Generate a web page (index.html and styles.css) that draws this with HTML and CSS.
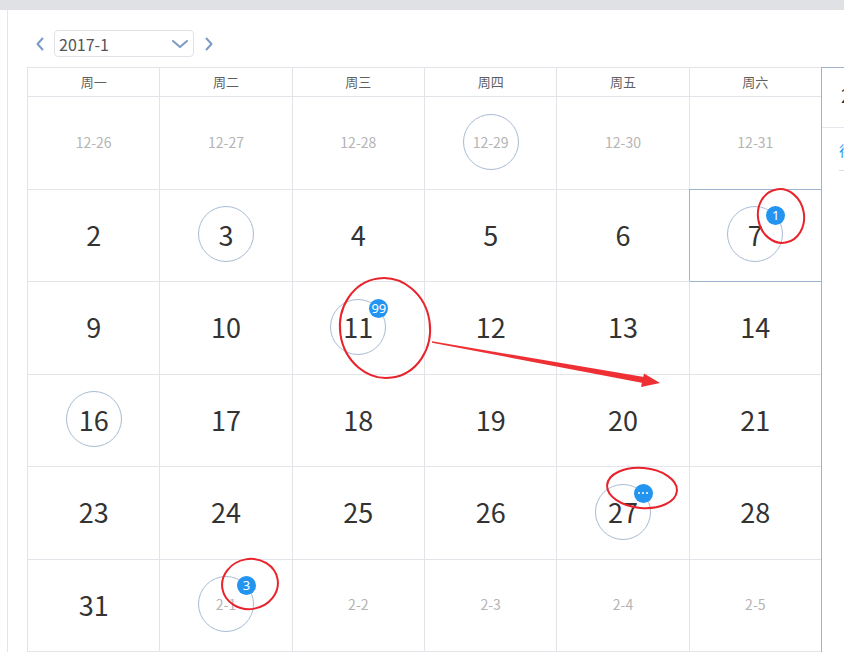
FILE: index.html
```html
<!DOCTYPE html>
<html lang="zh-CN">
<head>
<meta charset="utf-8">
<title>日历</title>
<link rel="stylesheet" href="styles.css">
</head>
<body>
<div class="topbar"></div>
<div class="page">
  <div class="nav">
    <svg class="arrow" width="10" height="14" viewBox="0 0 10 14"><path d="M7.5 1.5 L2.5 7 L7.5 12.5" fill="none" stroke="#7b9bc4" stroke-width="2" stroke-linecap="round" stroke-linejoin="round"/></svg>
    <div class="select">
      <span class="select-text">2017-1</span>
      <svg class="caret" width="18" height="10" viewBox="0 0 18 10"><path d="M2 2 L9 8 L16 2" fill="none" stroke="#7b9bc4" stroke-width="2" stroke-linecap="round" stroke-linejoin="round"/></svg>
    </div>
    <svg class="arrow" width="10" height="14" viewBox="0 0 10 14"><path d="M2.5 1.5 L7.5 7 L2.5 12.5" fill="none" stroke="#7b9bc4" stroke-width="2" stroke-linecap="round" stroke-linejoin="round"/></svg>
  </div>
  <div class="cal-wrap">
    <div class="cal">
      <div class="head">周一</div><div class="head">周二</div><div class="head">周三</div><div class="head">周四</div><div class="head">周五</div><div class="head">周六</div>

      <div class="cell"><span class="other">12-26</span></div>
      <div class="cell"><span class="other">12-27</span></div>
      <div class="cell"><span class="other">12-28</span></div>
      <div class="cell"><span class="ring"><span class="other">12-29</span></span></div>
      <div class="cell"><span class="other">12-30</span></div>
      <div class="cell"><span class="other">12-31</span></div>

      <div class="cell"><span class="day">2</span></div>
      <div class="cell"><span class="ring"><span class="day">3</span></span></div>
      <div class="cell"><span class="day">4</span></div>
      <div class="cell"><span class="day">5</span></div>
      <div class="cell"><span class="day">6</span></div>
      <div class="cell sel"><span class="ring"><span class="day">7</span><span class="badge">1</span></span></div>

      <div class="cell"><span class="day">9</span></div>
      <div class="cell"><span class="day">10</span></div>
      <div class="cell"><span class="ring"><span class="day">11</span><span class="badge">99</span></span></div>
      <div class="cell"><span class="day">12</span></div>
      <div class="cell"><span class="day">13</span></div>
      <div class="cell"><span class="day">14</span></div>

      <div class="cell"><span class="ring"><span class="day">16</span></span></div>
      <div class="cell"><span class="day">17</span></div>
      <div class="cell"><span class="day">18</span></div>
      <div class="cell"><span class="day">19</span></div>
      <div class="cell"><span class="day">20</span></div>
      <div class="cell"><span class="day">21</span></div>

      <div class="cell"><span class="day">23</span></div>
      <div class="cell"><span class="day">24</span></div>
      <div class="cell"><span class="day">25</span></div>
      <div class="cell"><span class="day">26</span></div>
      <div class="cell"><span class="ring"><span class="day">27</span><span class="badge dots"><i></i><i></i><i></i></span></span></div>
      <div class="cell"><span class="day">28</span></div>

      <div class="cell"><span class="day">31</span></div>
      <div class="cell"><span class="ring"><span class="other">2-1</span><span class="badge">3</span></span></div>
      <div class="cell"><span class="other">2-2</span></div>
      <div class="cell"><span class="other">2-3</span></div>
      <div class="cell"><span class="other">2-4</span></div>
      <div class="cell"><span class="other">2-5</span></div>
    </div>
    <div class="panel">
      <div class="panel-title">2017-01-07</div>
      <div class="panel-tabs"><span class="tab">待办事项</span></div>
    </div>
  </div>
</div>
<svg class="annot" width="844" height="652" viewBox="0 0 844 652">
  <g fill="none" stroke="#e8232b" stroke-width="2">
    <ellipse cx="781" cy="216" rx="23" ry="27" transform="rotate(-10 781 216)"/>
    <ellipse cx="385" cy="328" rx="45" ry="50" transform="rotate(-8 385 328)"/>
    <ellipse cx="642" cy="488" rx="35" ry="20" transform="rotate(5 642 488)"/>
    <ellipse cx="250" cy="584" rx="28" ry="25" transform="rotate(-10 250 584)"/>
  </g>
  <polygon points="432,341.3 432,342.7 643,383 644,377" fill="#ee2f33"/>
  <polygon points="660,383 644,373.5 641,387" fill="#ee2f33"/>
</svg>
</body>
</html>
```
FILE: styles.css
```css
* { box-sizing: border-box; }
html, body {
  margin: 0;
  padding: 0;
  width: 844px;
  height: 652px;
  overflow: hidden;
  background: #fff;
  font-family: "Noto Sans CJK SC", "Noto Sans", sans-serif;
  color: #333;
}
.topbar {
  height: 10px;
  background: #dfe1e5;
}
.page {
  margin-left: 7px;
  border-left: 1px solid #e3e5e9;
  height: 642px;
  padding: 20px 0 0 19px;
}
.nav {
  display: flex;
  align-items: center;
  height: 27px;
  margin-bottom: 10px;
  padding-left: 8px;
}
.arrow { display: block; }
.select {
  width: 140px;
  height: 27px;
  margin: 0 10px 0 9px;
  border: 1px solid #dfe2e7;
  border-radius: 4px;
  display: flex;
  align-items: center;
  justify-content: space-between;
  padding: 0 4px 0 4px;
}
.select-text {
  font-size: 16px;
  color: #555;
  line-height: 1;
}
.caret { display: block; }
.cal-wrap {
  display: flex;
  align-items: flex-start;
}
.cal {
  width: 795px;
  display: grid;
  grid-template-columns: repeat(6, 1fr);
  grid-template-rows: 29px repeat(6, 92.5px);
  border-top: 1px solid #e2e4e9;
  border-left: 1px solid #e2e4e9;
  flex: none;
}
.head, .cell {
  border-right: 1px solid #e2e4e9;
  border-bottom: 1px solid #e2e4e9;
  display: flex;
  align-items: center;
  justify-content: center;
}
.head {
  font-size: 13px;
  color: #5f5f5f;
  padding-bottom: 1px;
}
.cell { padding-bottom: 2px; }
.cell.sel {
  position: relative;
  border-right-color: #9fb3cd;
  border-bottom-color: #9fb3cd;
  box-shadow: -1px -1px 0 0 #9fb3cd;
}
.day {
  font-size: 27px;
  color: #333;
  line-height: 1;
}
.other {
  font-size: 14px;
  color: #b4b4b4;
  line-height: 1;
}
.ring {
  position: relative;
  width: 56px;
  height: 56px;
  border: 1px solid #a8bbd3;
  border-radius: 50%;
  display: flex;
  align-items: center;
  justify-content: center;
}
.badge {
  position: absolute;
  top: -1px;
  left: 38px;
  width: 19px;
  height: 19px;
  border-radius: 50%;
  background: #2394f0;
  color: #fff;
  font-size: 13px;
  line-height: 19px;
  text-align: center;
  font-family: "Noto Sans", sans-serif;
}
.badge.dots {
  display: flex;
  align-items: center;
  justify-content: center;
  gap: 2px;
}
.badge.dots i {
  display: block;
  width: 2px;
  height: 2px;
  border-radius: 50%;
  background: #fff;
}
.panel {
  flex: none;
  width: 300px;
  height: 585px;
  margin-left: -1px;
  position: relative;
  border-left: 1px solid #9fb3cd;
  border-top: 1px solid #9fb3cd;
  background: #fff;
}
.panel-title {
  height: 60px;
  border-bottom: 1px solid #e4e7ed;
  padding: 14px 0 0 19px;
  font-size: 18px;
  color: #333;
}
.panel-tabs {
  padding: 12px 0 0 17px;
}
.tab {
  display: block;
  font-size: 14px;
  color: #2394f0;
  padding-bottom: 10px;
  border-bottom: 1px solid #dcdfe6;
  width: 80px;
}
.annot {
  position: absolute;
  left: 0;
  top: 0;
  pointer-events: none;
}
```
